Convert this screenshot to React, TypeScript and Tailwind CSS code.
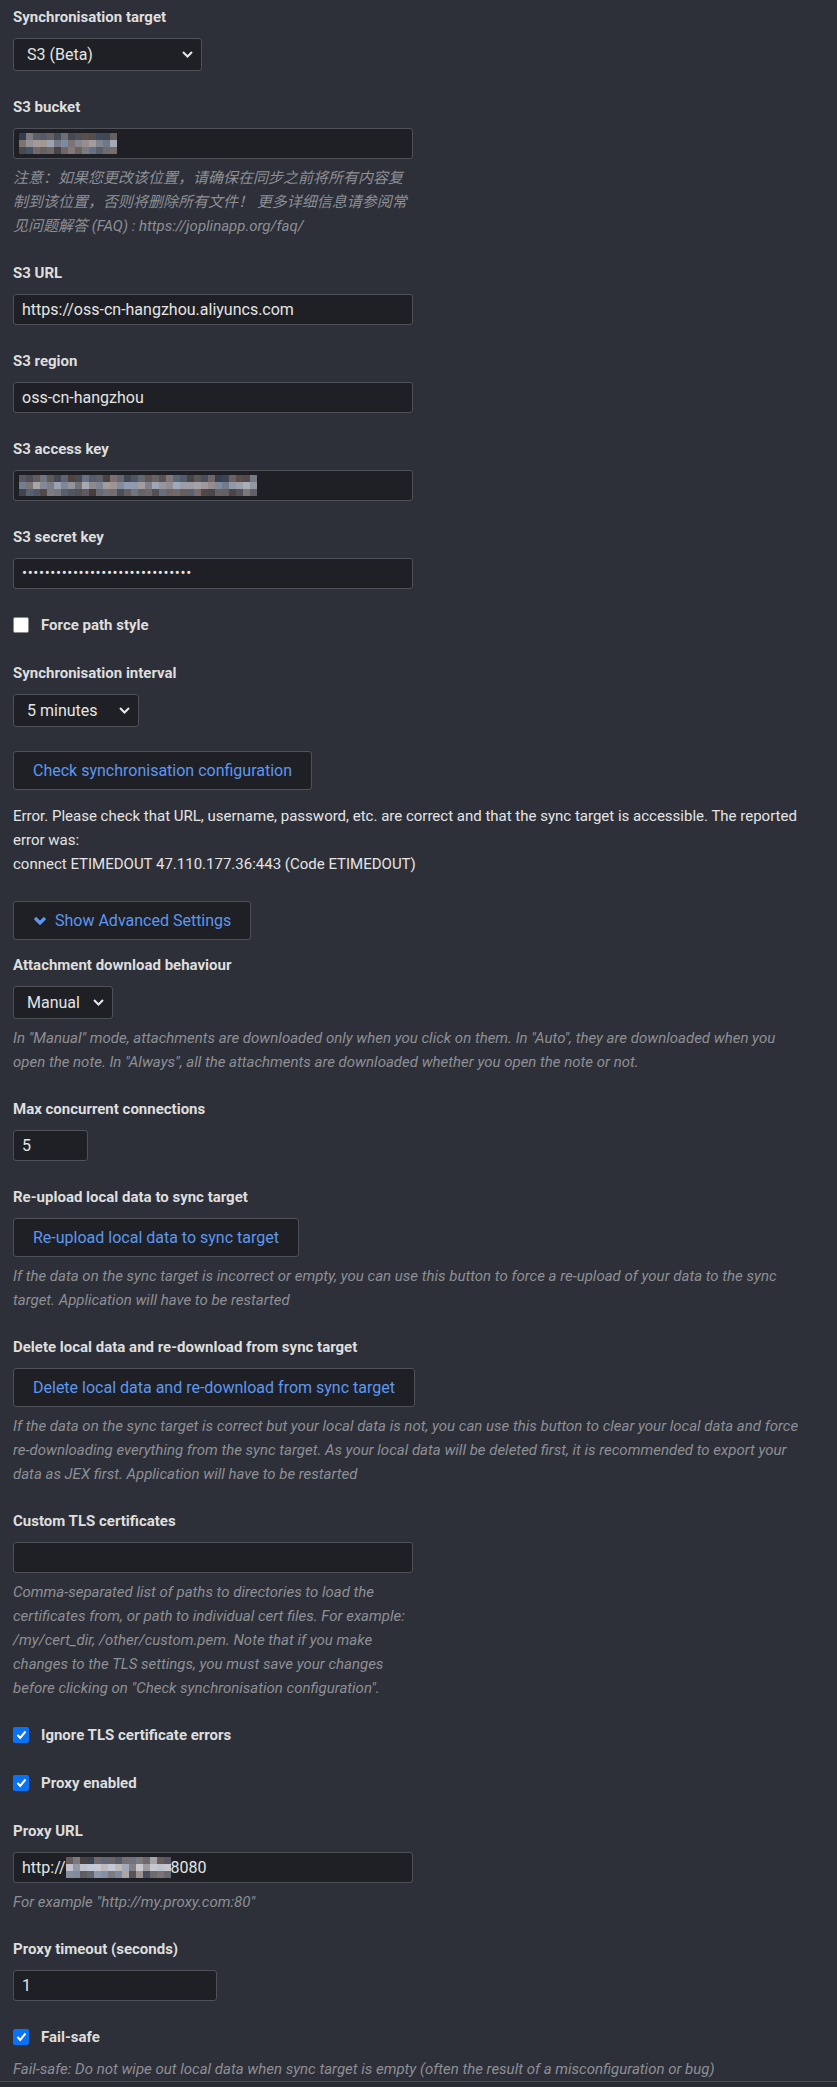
import type { ReactNode } from 'react';

const FONT = { fontFamily: 'Roboto, "Noto Sans CJK SC", "Liberation Sans", sans-serif' };

function rng(seed: number) {
  let a = seed;
  return () => {
    a |= 0;
    a = (a + 0x6d2b79f5) | 0;
    let t = Math.imul(a ^ (a >>> 15), 1 | a);
    t = (t + Math.imul(t ^ (t >>> 7), 61 | t)) ^ t;
    return ((t ^ (t >>> 14)) >>> 0) / 4294967296;
  };
}

// pixelated blur that hides the real values in the screenshot
function Mosaic({ cols, seed, light = false }: { cols: number; seed: number; light?: boolean }) {
  const r = rng(seed);
  const rows = [0, 1, 2];
  return (
    <div className="flex flex-col">
      {rows.map((row) => (
        <div key={row} className="flex">
          {Array.from({ length: cols }).map((_, i) => {
            const base = row === 1 ? 0.55 : 0.2;
            const v = Math.min(1, base + r() * (light ? 0.6 : 0.45));
            const lo = 32;
            const hi = light ? 200 : 175;
            const g = Math.round(lo + (hi - lo) * v);
            const tint = Math.round((r() - 0.5) * 24);
            return (
              <div
                key={i}
                className="w-[7px] h-[7px]"
                style={{ backgroundColor: `rgb(${g + tint},${g},${g + 8 - tint})` }}
              />
            );
          })}
        </div>
      ))}
    </div>
  );
}

function Label({ children }: { children: ReactNode }) {
  return <div className="text-[15px] font-bold leading-5 text-[#dedede] mb-[11px]">{children}</div>;
}

function Help({ children, narrow = false }: { children: ReactNode; narrow?: boolean }) {
  return (
    <div className={`mt-[7px] text-[15px] italic leading-6 text-[#8d8f95] ${narrow ? 'max-w-[402px]' : 'max-w-[790px]'}`}>
      {children}
    </div>
  );
}

function TextBox({ width = 'w-[400px]', children }: { width?: string; children?: ReactNode }) {
  return (
    <div
      className={`${width} h-[31px] rounded-[3px] border border-[#4e5158] bg-[#1e2025] px-[8px] flex items-center text-[16px] text-[#e4e4e4] overflow-hidden whitespace-nowrap`}
    >
      {children}
    </div>
  );
}

function Select({ value, width }: { value: string; width: string }) {
  return (
    <div
      className={`${width} h-[33px] rounded-[3px] border border-[#4e5158] bg-[#1e2025] pl-[13px] pr-[8px] flex items-center justify-between text-[16px] text-[#e4e4e4]`}
    >
      <span>{value}</span>
      <svg width="11" height="7" viewBox="0 0 11 7" fill="none">
        <polyline points="1,1 5.5,5.5 10,1" stroke="#e8e8e8" strokeWidth="2" />
      </svg>
    </div>
  );
}

function Button({ children }: { children: ReactNode }) {
  return (
    <div className="inline-flex h-[39px] items-center gap-[8px] rounded-[3px] border border-[#4e5158] bg-[#1e2025] px-[19px] text-[16px] text-[#5d97f0]">
      {children}
    </div>
  );
}

function Check({ checked, label }: { checked: boolean; label: string }) {
  return (
    <div className="flex h-5 items-center gap-[12px]">
      {checked ? (
        <div className="flex h-4 w-4 items-center justify-center rounded-[2px] bg-[#0b72f5]">
          <svg width="11" height="10" viewBox="0 0 11 10" fill="none">
            <polyline points="1.5,5 4.2,8 9.5,1.5" stroke="#ffffff" strokeWidth="2" />
          </svg>
        </div>
      ) : (
        <div className="h-4 w-4 rounded-[2px] border border-[#8a8a8a] bg-white" />
      )}
      <span className="text-[15px] font-bold text-[#dedede]">{label}</span>
    </div>
  );
}

export default function App() {
  return (
    <div className="min-h-screen bg-[#2d3038]" style={FONT}>
      <div className="px-[13px] pt-[7px]">
        <div className="pb-[26px]">
          <Label>Synchronisation target</Label>
          <Select value="S3 (Beta)" width="w-[189px]" />
        </div>

        <div className="pb-[25px]">
          <Label>S3 bucket</Label>
          <TextBox>
            <div className="-ml-[3px]">
              <Mosaic cols={14} seed={7} />
            </div>
          </TextBox>
          <Help narrow>
            注意：如果您更改该位置，请确保在同步之前将所有内容复制到该位置，否则将删除所有文件！ 更多详细信息请参阅常见问题解答 (FAQ) : https://joplinapp.org/faq/
          </Help>
        </div>

        <div className="pb-[26px]">
          <Label>S3 URL</Label>
          <TextBox>https://oss-cn-hangzhou.aliyuncs.com</TextBox>
        </div>

        <div className="pb-[26px]">
          <Label>S3 region</Label>
          <TextBox>oss-cn-hangzhou</TextBox>
        </div>

        <div className="pb-[26px]">
          <Label>S3 access key</Label>
          <TextBox>
            <div className="-ml-[3px]">
              <Mosaic cols={34} seed={21} />
            </div>
          </TextBox>
        </div>

        <div className="pb-[26px]">
          <Label>S3 secret key</Label>
          <TextBox>
            <span className="text-[15px] tracking-[0.6px]">{'•'.repeat(30)}</span>
          </TextBox>
        </div>

        <div className="pb-[28px]">
          <Check checked={false} label="Force path style" />
        </div>

        <div className="pb-[24px]">
          <Label>Synchronisation interval</Label>
          <Select value="5 minutes" width="w-[126px]" />
        </div>

        <Button>Check synchronisation configuration</Button>
        <div className="mt-[14px] text-[15px] leading-6 text-[#e4e4e4] max-w-[790px]">
          <div>
            Error. Please check that URL, username, password, etc. are correct and that the sync target is accessible. The reported error was:
          </div>
          <div>connect ETIMEDOUT 47.110.177.36:443 (Code ETIMEDOUT)</div>
        </div>

        <div className="mt-[25px] pb-[15px]">
          <Button>
            <svg width="14" height="10" viewBox="0 0 14 10" fill="none">
              <polyline points="2,2 7,7 12,2" stroke="#5d97f0" strokeWidth="3.2" />
            </svg>
            <span>Show Advanced Settings</span>
          </Button>
        </div>

        <div className="pb-[25px]">
          <Label>Attachment download behaviour</Label>
          <Select value="Manual" width="w-[100px]" />
          <Help>
            In "Manual" mode, attachments are downloaded only when you click on them. In "Auto", they are downloaded when you open the note. In "Always", all the attachments are downloaded whether you open the note or not.
          </Help>
        </div>

        <div className="pb-[26px]">
          <Label>Max concurrent connections</Label>
          <TextBox width="w-[75px]">5</TextBox>
        </div>

        <div className="pb-[25px]">
          <Label>Re-upload local data to sync target</Label>
          <Button>Re-upload local data to sync target</Button>
          <Help>
            If the data on the sync target is incorrect or empty, you can use this button to force a re-upload of your data to the sync target. Application will have to be restarted
          </Help>
        </div>

        <div className="pb-[25px]">
          <Label>Delete local data and re-download from sync target</Label>
          <Button>Delete local data and re-download from sync target</Button>
          <Help>
            If the data on the sync target is correct but your local data is not, you can use this button to clear your local data and force re-downloading everything from the sync target. As your local data will be deleted first, it is recommended to export your data as JEX first. Application will have to be restarted
          </Help>
        </div>

        <div className="pb-[25px]">
          <Label>Custom TLS certificates</Label>
          <TextBox />
          <Help narrow>
            Comma-separated list of paths to directories to load the certificates from, or path to individual cert files. For example: /my/cert_dir, /other/custom.pem. Note that if you make changes to the TLS settings, you must save your changes before clicking on "Check synchronisation configuration".
          </Help>
        </div>

        <div className="pb-[28px]">
          <Check checked label="Ignore TLS certificate errors" />
        </div>

        <div className="pb-[28px]">
          <Check checked label="Proxy enabled" />
        </div>

        <div className="pb-[25px]">
          <Label>Proxy URL</Label>
          <TextBox>
            <span>http://</span>
            <Mosaic cols={15} seed={99} light />
            <span>8080</span>
          </TextBox>
          <Help>For example "http://my.proxy.com:80"</Help>
        </div>

        <div className="pb-[26px]">
          <Label>Proxy timeout (seconds)</Label>
          <TextBox width="w-[204px]">1</TextBox>
        </div>

        <div>
          <Check checked label="Fail-safe" />
          <div className="mt-[10px] text-[15px] italic leading-6 text-[#8d8f95]">
            Fail-safe: Do not wipe out local data when sync target is empty (often the result of a misconfiguration or bug)
          </div>
        </div>
      </div>
      <div className="h-[60px] border-t border-[#4a4d55] bg-[#2a2d34]" />
    </div>
  );
}
